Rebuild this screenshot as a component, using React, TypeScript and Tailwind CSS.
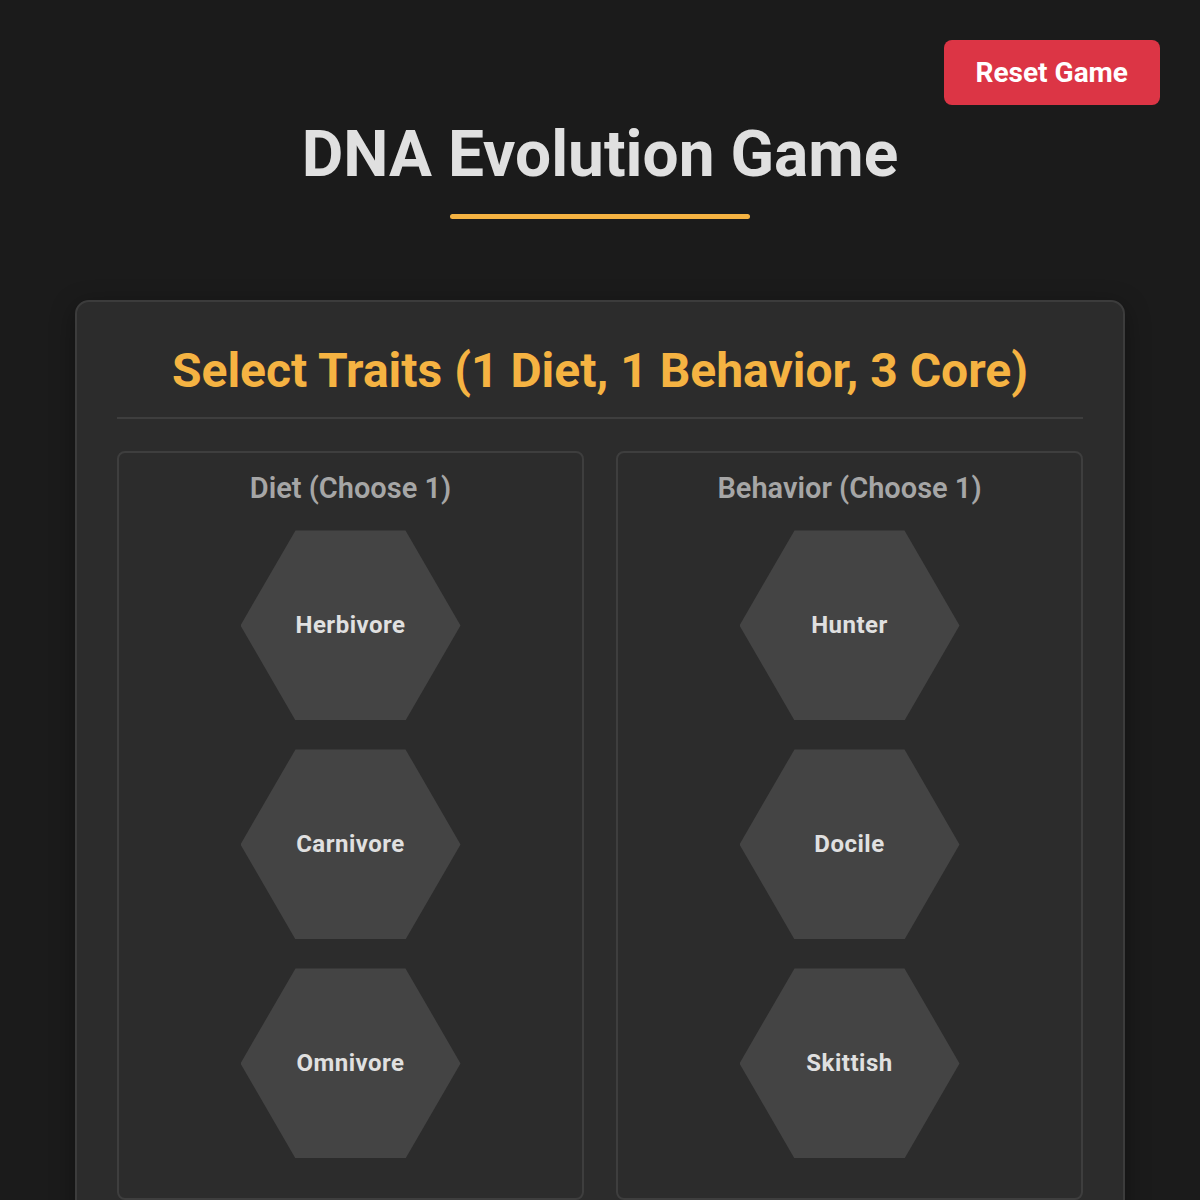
const diets = ["Herbivore", "Carnivore", "Omnivore"];
const behaviors = ["Hunter", "Docile", "Skittish"];

function Hex({ label }: { label: string }) {
  return (
    <div className="flex h-[190px] w-[220px] items-center justify-center bg-[#444444] [clip-path:polygon(25%_0,75%_0,100%_50%,75%_100%,25%_100%,0_50%)]">
      <span className="text-[24px] font-bold tracking-[0.5px] text-[#e0e0e0]">
        {label}
      </span>
    </div>
  );
}

function TraitGroup({ title, items }: { title: string; items: string[] }) {
  return (
    <div className="flex flex-col items-center rounded-lg border-2 border-[#3e3e3e] pt-[18px] pb-10">
      <h3 className="text-[29px] leading-[1.2] font-semibold text-[#a6a6a6]">{title}</h3>
      <div className="mt-[25px] flex flex-col items-center gap-[29px]">
        {items.map((t) => (
          <Hex key={t} label={t} />
        ))}
      </div>
    </div>
  );
}

export default function App() {
  return (
    <div className="relative min-h-screen bg-[#1b1b1b] pt-[118px] pb-20 font-['Roboto',sans-serif]">
      <button className="absolute top-10 right-10 h-[65px] rounded-lg bg-[#dc3545] px-8 text-[28px] font-bold text-white">
        Reset Game
      </button>

      <header className="flex flex-col items-center">
        <h1 className="text-[64px] leading-[74px] font-bold text-[#e0e0e0]">DNA Evolution Game</h1>
        <div className="mt-[22px] h-[5px] w-[300px] rounded-full bg-[#f5b342]" />
      </header>

      <section className="mx-auto mt-[81px] w-[1050px] rounded-[14px] border-2 border-[#3c3c3c] bg-[#2c2c2c] p-10 shadow-[0_6px_24px_rgba(0,0,0,0.35)]">
        <h2 className="border-b-2 border-[#3e3e3e] pb-[17px] text-center text-[48px] leading-[1.2] font-bold text-[#f5b342]">
          Select Traits (1 Diet, 1 Behavior, 3 Core)
        </h2>
        <div className="mt-8 grid grid-cols-2 gap-8">
          <TraitGroup title="Diet (Choose 1)" items={diets} />
          <TraitGroup title="Behavior (Choose 1)" items={behaviors} />
        </div>
      </section>
    </div>
  );
}
